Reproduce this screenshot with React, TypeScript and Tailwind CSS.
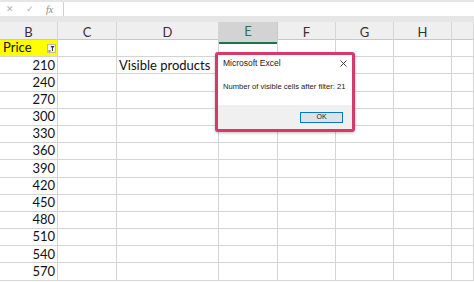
import React from 'react';

const COLS = ['B', 'C', 'D', 'E', 'F', 'G', 'H', ''];
const PRICES = [210, 240, 270, 300, 330, 360, 390, 420, 450, 480, 510, 540, 570, ''];

const gridCols = 'grid grid-cols-[58px_59px_102px_59px_58px_58px_58px_1fr]';

const FilterButton = () => (
  <div className="w-[9px] h-[9px] bg-[#f4f4f4] border border-[#b9b9b9] flex items-center justify-center">
    <svg width="7" height="7" viewBox="0 0 7 7">
      <path d="M2.5 1 H6.5 L5 3 V6 H4 V3 Z" fill="#333" />
      <path d="M0.5 6 H2.5" stroke="#333" strokeWidth="1" />
    </svg>
  </div>
);

const Cell = ({ col, row }: { col: number; row: number }) => {
  if (col === 0) {
    if (row === 0) {
      return (
        <div className="bg-[#ffff00] border-r border-b border-[#d4d4d4] flex items-center justify-between pl-[3px] pr-[1px]">
          <span>Price</span>
          <FilterButton />
        </div>
      );
    }
    return (
      <div className="border-r border-b border-[#d4d4d4] flex items-center justify-end pr-[2px]">
        {PRICES[row - 1]}
      </div>
    );
  }
  if (col === 2 && row === 1) {
    return (
      <div className="border-r border-b border-[#d4d4d4] flex items-center pl-[2px] whitespace-nowrap overflow-visible">
        Visible products
      </div>
    );
  }
  return <div className="border-r border-b border-[#d4d4d4]" />;
};

export default function App() {
  return (
    <div className="relative w-[474px] h-[282px] overflow-hidden bg-white font-['Lato',sans-serif] text-[13px] text-[#111]">
      {/* formula bar */}
      <div className="h-[22px] bg-[#e6e6e6] pt-[2px] pb-[6px]">
        <div className="h-[14px] bg-white flex items-center">
          <div className="w-[63px] flex items-center text-[#b0b0b0] text-[9px] pl-[6px] gap-[12px]">
            <span>✕</span>
            <span>✓</span>
            <span className="italic font-['Liberation_Serif',serif] text-[10px] text-[#8a8a8a]">fx</span>
          </div>
          <div className="flex-1 h-full border-l border-[#d0d0d0]" />
        </div>
      </div>

      {/* column headers */}
      <div className={`${gridCols} h-[18px] bg-[#efefef] border-b border-[#c8c8c8] text-[#333] text-[13px]`}>
        {COLS.map((c, i) => (
          <div
            key={i}
            className={
              c === 'E'
                ? 'bg-[#d3d3d3] border-r border-[#c8c8c8] border-b-2 border-b-[#217346] flex items-center justify-center text-[#3f6b52]'
                : 'border-r border-[#d6d6d6] flex items-center justify-center'
            }
          >
            {c}
          </div>
        ))}
      </div>

      {/* cells */}
      <div className={`${gridCols} auto-rows-[17.2px]`}>
        {PRICES.map((_, r) =>
          COLS.map((_, c) => <Cell key={`${r}-${c}`} col={c} row={r} />)
        )}
      </div>

      {/* message box */}
      <div className="absolute left-[215px] top-[52px] w-[140px] h-[80px] border-[3px] border-[#d9386b] rounded-[3px] bg-white shadow-[0_1px_3px_rgba(0,0,0,0.25)] flex flex-col font-['Liberation_Sans',sans-serif] text-[#1a1a1a]">
        <div className="h-[17px] flex items-center justify-between pl-[5px] pr-[5px] text-[8.5px]">
          <span>Microsoft Excel</span>
          <svg width="7" height="7" viewBox="0 0 7 7">
            <path d="M0.5 0.5 L6.5 6.5 M6.5 0.5 L0.5 6.5" stroke="#333" strokeWidth="0.9" />
          </svg>
        </div>
        <div className="flex-1 flex items-center pl-[5px] text-[7.6px] pb-[4px] whitespace-nowrap">
          Number of visible cells after filter: 21
        </div>
        <div className="h-[24px] bg-[#f0f0f0] flex items-center justify-end pr-[9px]">
          <div className="w-[43px] h-[11px] bg-[#e1e1e1] border border-[#0078d7] flex items-center justify-center text-[7px]">
            OK
          </div>
        </div>
      </div>
    </div>
  );
}
